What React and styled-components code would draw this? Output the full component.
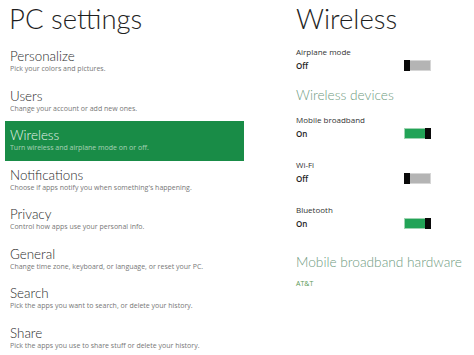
import styled, { createGlobalStyle } from "styled-components";

const GlobalStyle = createGlobalStyle`
  body {
    margin: 0;
    background: #ffffff;
    font-family: "Open Sans", "Noto Sans", sans-serif;
    color: #222;
  }
`;

//Data
const categories = [
  { name: "Personalize", hint: "Pick your colors and pictures." },
  { name: "Users", hint: "Change your account or add new ones." },
  { name: "Wireless", hint: "Turn wireless and airplane mode on or off.", active: true },
  { name: "Notifications", hint: "Choose if apps notify you when something's happening." },
  { name: "Privacy", hint: "Control how apps use your personal info." },
  { name: "General", hint: "Change time zone, keyboard, or language, or reset your PC." },
  { name: "Search", hint: "Pick the apps you want to search, or delete your history." },
  { name: "Share", hint: "Pick the apps you use to share stuff or delete your history." },
];

const devices = [
  { name: "Mobile broadband", on: true },
  { name: "Wi-Fi", on: false },
  { name: "Bluetooth", on: true },
];

export default function App() {
  return (
    <>
      <GlobalStyle />
      <Page>
        <Nav>
          <Title>PC settings</Title>
          <Menu>
            {categories.map((item) => (
              <MenuItem key={item.name} $active={item.active}>
                <ItemName>{item.name}</ItemName>
                <ItemHint>{item.hint}</ItemHint>
              </MenuItem>
            ))}
          </Menu>
        </Nav>

        <Panel>
          <Title>Wireless</Title>
          <Setting>
            <Label>Airplane mode</Label>
            <ValueRow>
              <Value>Off</Value>
              <Toggle $on={false} />
            </ValueRow>
          </Setting>

          <Section>Wireless devices</Section>
          <Devices>
            {devices.map((d) => (
              <Setting key={d.name}>
                <Label>{d.name}</Label>
                <ValueRow>
                  <Value>{d.on ? "On" : "Off"}</Value>
                  <Toggle $on={d.on} />
                </ValueRow>
              </Setting>
            ))}
          </Devices>

          <Section $low>Mobile broadband hardware</Section>
          <Carrier>AT&amp;T</Carrier>
        </Panel>
      </Page>
    </>
  );
}

const Page = styled.div`
  display: flex;
  width: 474px;
  height: 355px;
  overflow: hidden;
`;

const Nav = styled.div`
  width: 296px;
  flex-shrink: 0;
`;

const Title = styled.h1`
  margin: 0;
  padding: 2px 0 0 9px;
  font-family: "Lato", "Open Sans", sans-serif;
  font-size: 27.5px;
  font-weight: 300;
  line-height: 34px;
  color: #1e1e1e;
`;

const Panel = styled.div`
  flex: 1;

  ${Title} {
    padding-left: 0;
  }
`;

const Menu = styled.div`
  margin-top: 6px;
`;

const MenuItem = styled.div`
  width: 239px;
  height: 39.5px;
  margin-left: 5px;
  padding: 6px 5px 0;
  box-sizing: border-box;
  background: ${(p) => (p.$active ? "#198c47" : "transparent")};
  color: ${(p) => (p.$active ? "#e9f5ec" : "#2a2a2a")};
`;

const ItemName = styled.div`
  font-family: "Lato", "Open Sans", sans-serif;
  font-size: 13.4px;
  font-weight: 300;
  line-height: 16px;
`;

const ItemHint = styled.div`
  font-size: 7px;
  line-height: 10px;
  opacity: 0.65;
`;

const Devices = styled.div`
  display: flex;
  flex-direction: column;
  gap: 20px;
  margin-top: 9px;
`;

const Setting = styled.div`
  margin-top: 10px;
  ${Devices} & {
    margin-top: 0;
  }
`;

const Label = styled.div`
  font-size: 8px;
  line-height: 11px;
  color: #333;
`;

const ValueRow = styled.div`
  display: flex;
  align-items: center;
  justify-content: space-between;
  width: 135px;
  margin-top: 3px;
`;

const Value = styled.div`
  font-size: 8px;
  font-weight: 600;
  line-height: 11px;
  color: #222;
`;

const Toggle = styled.div`
  position: relative;
  width: 27px;
  height: 11px;
  box-sizing: border-box;
  border: 1px solid ${(p) => (p.$on ? "#9fd4b2" : "#d6d6d6")};
  background: ${(p) => (p.$on ? "#22a357" : "#b4b4b4")};

  &::after {
    content: "";
    position: absolute;
    top: -1px;
    bottom: -1px;
    ${(p) => (p.$on ? "right: -1px;" : "left: -1px;")}
    width: 6px;
    background: #0a0a0a;
  }
`;

const Section = styled.div`
  margin-top: ${(p) => (p.$low ? "23px" : "14px")};
  font-family: "Lato", "Open Sans", sans-serif;
  font-size: 13.7px;
  font-weight: 300;
  line-height: 20px;
  white-space: nowrap;
  color: #6e9a80;
`;

const Carrier = styled.div`
  margin-top: 7px;
  font-size: 7px;
  line-height: 10px;
  color: #5d9a58;
`;
